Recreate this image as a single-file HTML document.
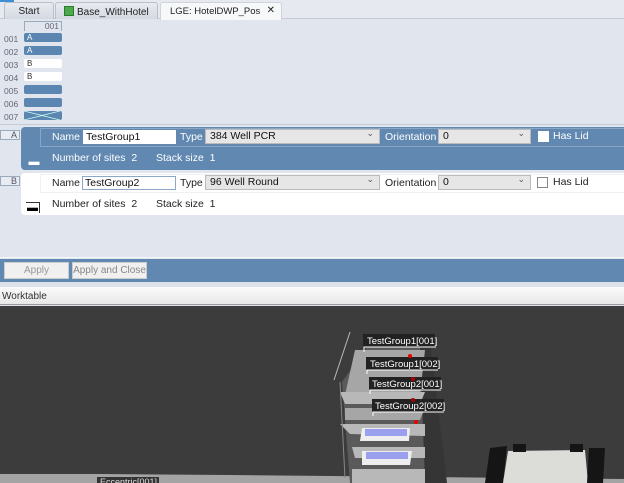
<!DOCTYPE html>
<html><head><meta charset="utf-8"><style>
*{box-sizing:border-box;margin:0;padding:0}
body{width:624px;height:483px;overflow:hidden;background:#e1e5ee;font-family:"Liberation Sans",sans-serif;font-size:10px;color:#222;position:relative}
.a{position:absolute}
.tab{position:absolute;top:2px;height:17px;border:1px solid #b9c0cb;border-bottom:none;background:linear-gradient(#e8ebf0,#d4d9e2);font-size:10px;padding-top:3px;text-align:center;border-radius:3px 3px 0 0}
.rl{position:absolute;left:4px;font-size:8.5px;color:#667}
.cell{position:absolute;left:24px;width:38px;height:9px;border-radius:2px;background:#5b86b2;font-size:8px;color:#fff;padding-left:3px;line-height:9px}
.cell.w{background:#fff;color:#333}
.inp{position:absolute;height:14px;background:#fff;border:1px solid #8ca8c8;font-size:10.5px;padding-left:2px;line-height:12px;color:#111}
.sel{position:absolute;height:15px;background:#e6e6e6;border:1px solid #bbb;font-size:10.5px;padding-left:4px;line-height:13px;color:#111}
.sel:after{content:"⌄";position:absolute;right:5px;top:-3px;font-size:9px;color:#555}
.lbl{position:absolute;font-size:10.5px}
.cb{position:absolute;width:11px;height:11px;background:#fff;border:1px solid #888}
.btn{position:absolute;top:262px;height:17px;background:#f0f0f0;border:1px solid #ccc;color:#999;font-size:10px;text-align:center;line-height:15px}
</style></head><body>
<div class="a" style="left:0;top:0;width:624px;height:19px;background:#e6e9ef;border-bottom:1px solid #c5ccd6"></div>
<div class="a" style="left:0;top:0;width:14px;height:2px;background:#3d8fd6"></div>
<div class="tab" style="left:4px;width:50px">Start</div>
<div class="tab" style="left:55px;width:103px;text-align:left;padding-left:8px"><span style="display:inline-block;width:10px;height:10px;background:#4caa4c;border:1px solid #2c7a2c;vertical-align:-1px;margin-right:3px"></span>Base_WithHotel</div>
<div class="tab" style="left:160px;width:122px;background:#f7f8fa;border-color:#cfd4dc;height:18px;text-align:left;padding-left:9px;font-size:9.5px">LGE: HotelDWP_Pos<span style="position:absolute;right:6px;top:2px;font-size:10px">✕</span></div>

<div class="a" style="left:24px;top:21px;width:38px;height:10px;border:1px solid #9ab;border-bottom:none;font-size:8.5px;color:#667;text-align:right;padding-right:2px;line-height:9px">001</div>
<div class="rl" style="top:34px">001</div><div class="cell" style="top:33px">A</div>
<div class="rl" style="top:47px">002</div><div class="cell" style="top:46px">A</div>
<div class="rl" style="top:60px">003</div><div class="cell w" style="top:59px">B</div>
<div class="rl" style="top:73px">004</div><div class="cell w" style="top:72px">B</div>
<div class="rl" style="top:86px">005</div><div class="cell" style="top:85px"></div>
<div class="rl" style="top:99px">006</div><div class="cell" style="top:98px"></div>
<div class="rl" style="top:112px">007</div><div class="cell" style="top:111px"><svg width="36" height="9" style="position:absolute;left:0;top:0"><path d="M0 0L36 9M0 9L36 0" stroke="#cfe" stroke-width=".8"/></svg></div>
<div class="a" style="left:0;top:124px;width:624px;height:1px;background:#c3cad6"></div>

<div class="a" style="left:0;top:130px;width:20px;height:10px;border:1px solid #9ab;background:#e8ebf1;font-size:9px;text-align:right;padding-right:2px;line-height:8px;color:#556">A</div>
<div class="a" style="left:21px;top:127px;width:603px;height:43px;background:#6088b1;border-radius:4px 0 0 4px"></div>
<div class="a" style="left:40px;top:128px;width:584px;height:19px;border:1px solid #8aa6c6;border-right:none"></div>
<div class="lbl" style="left:52px;top:131px;color:#fff">Name</div>
<div class="inp" style="left:83px;top:130px;width:93px;border-color:#fff">TestGroup1</div>
<div class="lbl" style="left:180px;top:131px;color:#fff">Type</div>
<div class="sel" style="left:205px;top:129px;width:175px">384 Well PCR</div>
<div class="lbl" style="left:385px;top:131px;color:#fff">Orientation</div>
<div class="sel" style="left:438px;top:129px;width:93px">0</div>
<div class="cb" style="left:538px;top:131px;border-color:#fff"></div>
<div class="lbl" style="left:553px;top:130px;color:#fff">Has Lid</div>
<div class="a" style="left:28px;top:158px;width:12px;height:10px;color:#fff;font-weight:bold;font-size:11px;line-height:8px;text-align:center">▬</div>
<div class="lbl" style="left:52px;top:152px;color:#fff">Number of sites&nbsp; 2</div>
<div class="lbl" style="left:156px;top:152px;color:#fff">Stack size&nbsp; 1</div>

<div class="a" style="left:0;top:176px;width:20px;height:10px;border:1px solid #9ab;background:#e8ebf1;font-size:9px;text-align:right;padding-right:2px;line-height:8px;color:#556">B</div>
<div class="a" style="left:21px;top:173px;width:603px;height:42px;background:#fff;border-radius:4px 0 0 4px"></div>
<div class="a" style="left:40px;top:174px;width:584px;height:19px;border:1px solid #eef0f4;border-right:none"></div>
<div class="lbl" style="left:52px;top:177px">Name</div>
<div class="inp" style="left:82px;top:176px;width:94px">TestGroup2</div>
<div class="lbl" style="left:180px;top:177px">Type</div>
<div class="sel" style="left:205px;top:175px;width:175px">96 Well Round</div>
<div class="lbl" style="left:385px;top:177px">Orientation</div>
<div class="sel" style="left:438px;top:175px;width:93px">0</div>
<div class="cb" style="left:537px;top:177px"></div>
<div class="lbl" style="left:553px;top:176px">Has Lid</div>
<div class="a" style="left:26px;top:202px;width:14px;height:11px;border-top:1px solid #333;border-right:1px solid #333;color:#000;font-weight:bold;font-size:11px;line-height:10px;text-align:center">▬</div>
<div class="lbl" style="left:52px;top:198px">Number of sites&nbsp; 2</div>
<div class="lbl" style="left:156px;top:198px">Stack size&nbsp; 1</div>

<div class="a" style="left:0;top:257px;width:624px;height:1px;background:#f4f6f9"></div>
<div class="a" style="left:0;top:259px;width:624px;height:23px;background:#6088b1"></div>
<div class="btn" style="left:4px;width:65px">Apply</div>
<div class="btn" style="left:72px;width:75px;color:#888">Apply and Close</div>
<div class="a" style="left:0;top:282px;width:624px;height:5px;background:#dde2ea"></div>
<div class="a" style="left:0;top:287px;width:624px;height:18px;background:linear-gradient(#fafafa,#e8e8e8);border-bottom:1px solid #999;font-size:10px;padding:4px 0 0 2px;color:#333">Worktable</div>

<svg class="a" style="left:0;top:306px" width="624" height="177" viewBox="0 306 624 177">
<rect x="0" y="306" width="624" height="177" fill="#3c3c3c"/>
<polygon points="0,474 100,474 230,475 624,479 624,483 0,483" fill="#a4a4a4"/>
<polygon points="342,382 372,340 425,345 430,483 350,483" fill="#5a5a5a"/>
<polygon points="420,345 430,342 447,483 425,483" fill="#353535"/>
<polygon points="355,350 425,350 420,395 345,395" fill="#a6a6a6"/>
<polygon points="340,392 425,392 420,404 345,404" fill="#b8b8b8"/>
<polygon points="345,408 425,408 420,420 345,420" fill="#a6a6a6"/>
<polygon points="340,424 425,424 425,436 350,434" fill="#b8b8b8"/>
<polygon points="352,447 425,447 425,458 355,458" fill="#b8b8b8"/>
<polygon points="352,469 425,469 425,483 352,483" fill="#b8b8b8"/>
<polygon points="362,428 410,428 409,441 360,441" fill="#eee"/>
<rect x="365" y="429" width="42" height="7" fill="#9aa0ee"/>
<polygon points="362,451 412,451 410,465 362,465" fill="#eee"/>
<rect x="366" y="452" width="42" height="7" fill="#9aa0ee"/>
<path d="M334,380 L350,332" stroke="#bbb" stroke-width="1"/>
<path d="M340,382 L345,478" stroke="#888" stroke-width="1"/>
<g font-family="Liberation Sans,sans-serif" font-size="9.5" fill="#fff">
<rect x="363" y="334" width="72" height="13" fill="#222"/><text x="367" y="344">TestGroup1[001]</text><path d="M364,352 V347 H436" stroke="#fff" fill="none"/>
<rect x="366" y="357" width="72" height="13" fill="#222"/><text x="370" y="367">TestGroup1[002]</text><path d="M367,374 V370 H438" stroke="#fff" fill="none"/>
<rect x="369" y="377" width="72" height="13" fill="#222"/><text x="372" y="387">TestGroup2[001]</text><path d="M370,394 V390 H441" stroke="#fff" fill="none"/>
<rect x="372" y="399" width="72" height="13" fill="#222"/><text x="375" y="409">TestGroup2[002]</text><path d="M373,416 V412 H444" stroke="#fff" fill="none"/>
</g>
<circle cx="410" cy="356" r="2" fill="#e00"/><circle cx="413" cy="379" r="2" fill="#a00"/><circle cx="413" cy="400" r="2" fill="#a00"/><circle cx="416" cy="422" r="2" fill="#e00"/>
<polygon points="508,451 585,450 588,483 503,483" fill="#dcdcd8"/>
<polygon points="490,448 507,446 503,483 485,483" fill="#151515"/>
<polygon points="589,448 605,448 603,483 587,483" fill="#151515"/>
<rect x="513" y="444" width="13" height="8" fill="#151515"/><rect x="570" y="444" width="13" height="8" fill="#151515"/>
<rect x="97" y="477" width="62" height="8" fill="#333"/><text x="100" y="485" font-family="Liberation Sans,sans-serif" font-size="9" fill="#ddd">Eccentric[001]</text>
</svg>
</body></html>
